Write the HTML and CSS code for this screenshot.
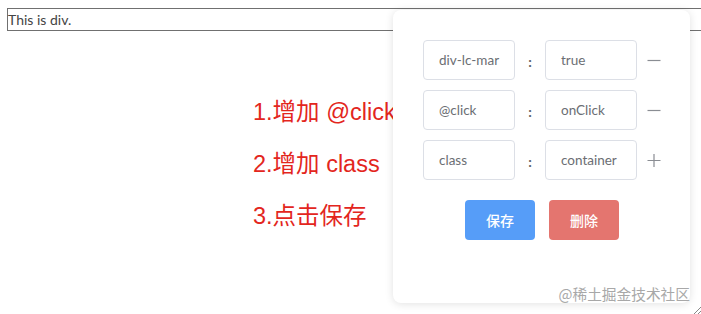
FILE: index.html
```html
<!DOCTYPE html>
<html>
<head>
<meta charset="utf-8">
<link rel="stylesheet" href="styles.css">
</head>
<body>
<div class="box">This is div.</div>
<div class="steps">
  <p>1.增加 @click</p>
  <p>2.增加 class</p>
  <p>3.点击保存</p>
</div>
<div class="panel">
  <div class="rows">
    <div class="row">
      <div class="inp">div-lc-mar</div><span class="colon">:</span><div class="inp">true</div>
      <svg class="op" width="14" height="14" viewBox="0 0 14 14"><path d="M0.5 7.5 H13.5" stroke="#8a8d93" stroke-width="1.2"/></svg>
    </div>
    <div class="row">
      <div class="inp">@click</div><span class="colon">:</span><div class="inp">onClick</div>
      <svg class="op" width="14" height="14" viewBox="0 0 14 14"><path d="M0.5 7.5 H13.5" stroke="#8a8d93" stroke-width="1.2"/></svg>
    </div>
    <div class="row">
      <div class="inp">class</div><span class="colon">:</span><div class="inp">container</div>
      <svg class="op" width="14" height="14" viewBox="0 0 14 14"><path d="M0.5 7.5 H13.5 M7 1 V14" stroke="#8a8d93" stroke-width="1.2"/></svg>
    </div>
  </div>
  <div class="btns">
    <div class="btn save">保存</div>
    <div class="btn del">删除</div>
  </div>
  <div class="mark">@稀土掘金技术社区</div>
</div>
<svg class="grip" width="8" height="8" viewBox="0 0 8 8"><path d="M1 8 L8 1 M5 8 L8 5" stroke="#888" stroke-width="1"/></svg>
</body>
</html>
```
FILE: styles.css
```css
html, body { margin: 0; padding: 0; background: #fff; width: 701px; height: 314px; overflow: hidden; position: relative; }
body { font-family: "Lato", "Liberation Sans", sans-serif; }
.box {
  margin: 8px 0 0 7px;
  width: 720px;
  height: 21px;
  border: 1px solid #707070;
  font-size: 14px;
  line-height: 21px;
  color: #444;
  box-sizing: content-box;
}
.steps { margin: 68px 0 0 253px; font-family: "Liberation Sans", "Noto Sans CJK SC", sans-serif; color: #e3261d; font-size: 23.5px; }
.steps p { margin: 0 0 26px 0; line-height: 26px; }
.panel {
  position: absolute;
  left: 393px; top: 10px;
  width: 297px; height: 293px;
  background: #fff;
  border-radius: 8px;
  box-shadow: 0 1px 8px rgba(0,0,0,0.12);
  font-family: "Lato", "Noto Sans CJK SC", sans-serif;
}
.rows { display: flex; flex-direction: column; gap: 10px; padding: 30px 0 0 30px; }
.row { display: flex; align-items: center; height: 40px; }
.inp {
  width: 92px; height: 40px; box-sizing: border-box;
  border: 1px solid #dcdfe6; border-radius: 4px;
  padding-left: 15px; font-size: 13.5px; color: #6b6e73;
  line-height: 38px; white-space: nowrap; overflow: hidden;
}
.colon { width: 30px; text-align: center; font-size: 14px; color: #606266; font-weight: bold; padding-top: 3px; }
.op { margin-left: 10px; }
.btns { display: flex; gap: 14px; padding: 20px 0 0 72px; }
.btn {
  width: 70px; height: 40px; border-radius: 4px; color: #fff;
  font-size: 14px; line-height: 40px; text-align: center; font-weight: 500;
  font-family: "Noto Sans CJK SC", sans-serif;
}
.save { background: #569df8; }
.del { background: #e4756f; }
.mark {
  position: absolute; right: 0; bottom: 0;
  font-family: "Noto Sans CJK SC", sans-serif;
  font-size: 14.7px; color: #a8a8a8; line-height: 18px;
}
.grip { position: absolute; right: 0; bottom: 0; }
```
